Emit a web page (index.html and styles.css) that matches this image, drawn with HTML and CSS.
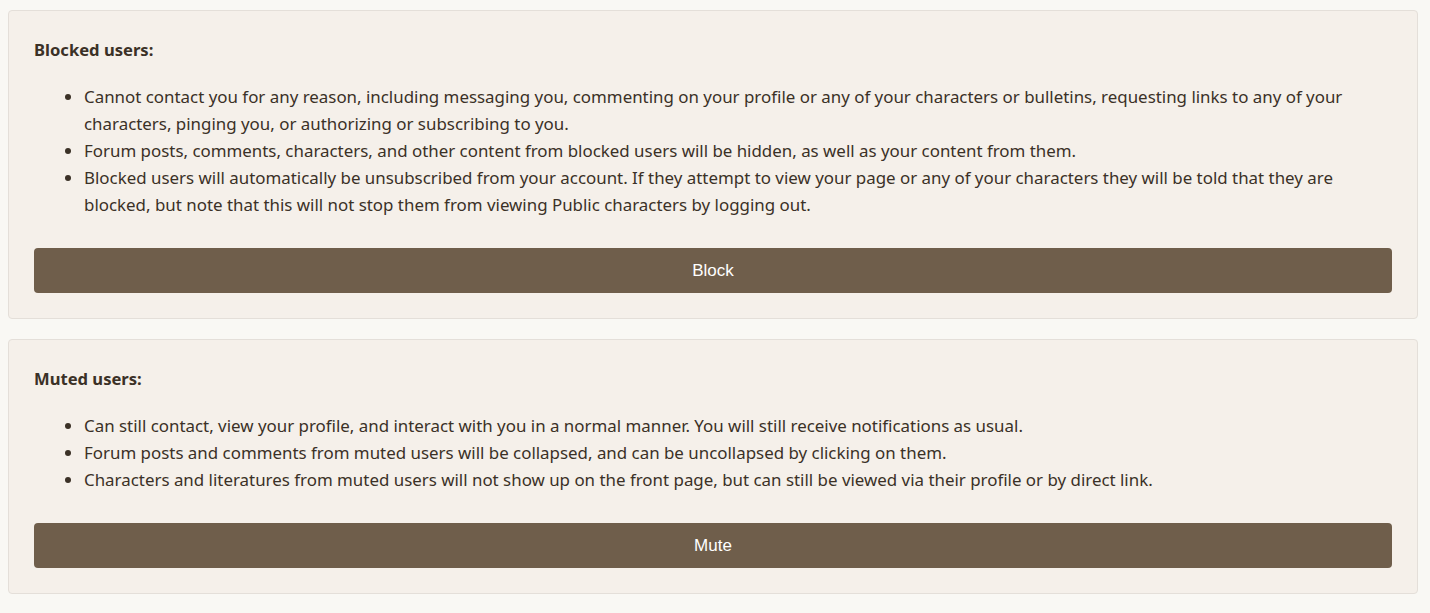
FILE: index.html
```html
<!DOCTYPE html>
<html lang="en">
<head>
  <meta charset="UTF-8">
  <meta name="viewport" content="width=device-width, initial-scale=1.0">
  <title>Blocked and muted users</title>
  <link rel="stylesheet" href="styles.css">
</head>
<body>
  <div class="panel">
    <p class="panel-title">Blocked users:</p>
    <ul class="rules">
      <li>Cannot contact you for any reason, including messaging you, commenting on your profile or any of your characters or bulletins, requesting links to any of your characters, pinging you, or authorizing or subscribing to you.</li>
      <li>Forum posts, comments, characters, and other content from blocked users will be hidden, as well as your content from them.</li>
      <li>Blocked users will automatically be unsubscribed from your account. If they attempt to view your page or any of your characters they will be told that they are blocked, but note that this will not stop them from viewing Public characters by logging out.</li>
    </ul>
    <button type="button" class="btn">Block</button>
  </div>

  <div class="panel">
    <p class="panel-title">Muted users:</p>
    <ul class="rules">
      <li>Can still contact, view your profile, and interact with you in a normal manner. You will still receive notifications as usual.</li>
      <li>Forum posts and comments from muted users will be collapsed, and can be uncollapsed by clicking on them.</li>
      <li>Characters and literatures from muted users will not show up on the front page, but can still be viewed via their profile or by direct link.</li>
    </ul>
    <button type="button" class="btn">Mute</button>
  </div>
</body>
</html>
```

FILE: styles.css
```css
body {
  font-family: "Segoe UI", "Noto Sans", "Open Sans", sans-serif;
  font-size: 16.9px;
  margin: 0;
  padding: 10px 12px 0 8px;
  color: #3b3127;
  background-color: #f9f8f4;
  line-height: 27px;
}

.panel {
  background-color: #f5f0ea;
  border: 1px solid #e4dfd9;
  border-radius: 4px;
  padding: 24px 25px 25px 25px;
  margin-bottom: 20px;
}

.panel-title {
  margin: 1px 0 20px;
  font-weight: bold;
  font-size: 16.6px;
}

.rules {
  margin: 0 0 30px;
  padding-left: 50px;
}

.btn {
  display: block;
  width: 100%;
  height: 45px;
  border: none;
  border-radius: 4px;
  background-color: #6f5e4b;
  color: #ffffff;
  font-family: "Liberation Sans", Arial, sans-serif;
  font-size: 17px;
  line-height: 46px;
  padding: 0;
  cursor: pointer;
}
```
